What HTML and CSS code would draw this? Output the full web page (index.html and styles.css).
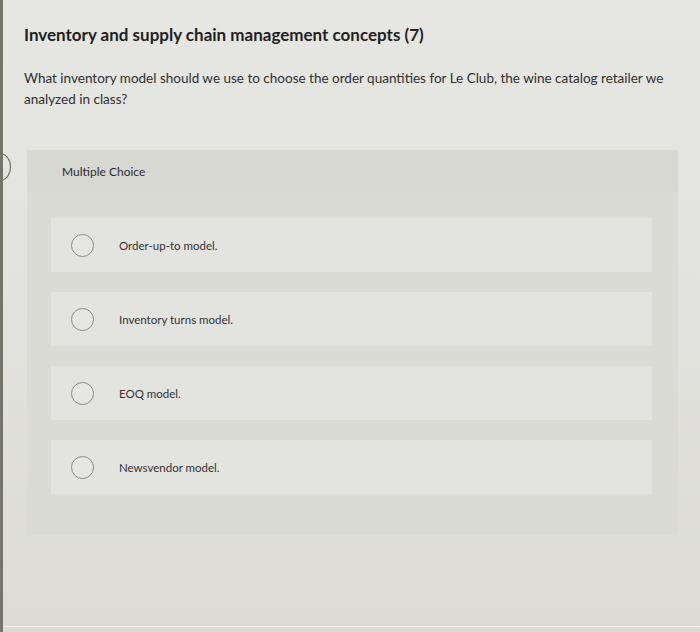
FILE: index.html
```html
<!DOCTYPE html>
<html lang="en">
<head>
<meta charset="utf-8">
<title>Inventory and supply chain management concepts (7)</title>
<link rel="stylesheet" href="styles.css">
</head>
<body>
<div class="edge-mark"></div>
<main class="page">
  <h1 class="title">Inventory and supply chain management concepts (7)</h1>
  <p class="question">What inventory model should we use to choose the order quantities for Le Club, the wine catalog retailer we analyzed in class?</p>
  <section class="panel">
    <div class="panel-head">Multiple Choice</div>
    <div class="options">
      <label class="option"><span class="radio"></span><span class="opt-text">Order-up-to model.</span></label>
      <label class="option"><span class="radio"></span><span class="opt-text">Inventory turns model.</span></label>
      <label class="option"><span class="radio"></span><span class="opt-text">EOQ model.</span></label>
      <label class="option"><span class="radio"></span><span class="opt-text">Newsvendor model.</span></label>
    </div>
  </section>
</main>
<div class="bottom-line"></div>
</body>
</html>
```

FILE: styles.css
```css
html, body {
  margin: 0;
  padding: 0;
}
body {
  position: relative;
  width: 700px;
  height: 632px;
  box-sizing: border-box;
  border-left: 3px solid #74746c;
  background: linear-gradient(180deg, #e6e6e3 0%, #e2e2de 50%, #dcdbd5 100%);
  font-family: Lato, "Open Sans", Arial, sans-serif;
  color: #333;
  overflow: hidden;
}
.edge-mark {
  position: absolute;
  left: -14px;
  top: 153px;
  width: 20px;
  height: 26px;
  border: 1.5px solid #6a6a62;
  border-radius: 50%;
}
.page {
  display: flex;
  flex-direction: column;
  padding-top: 24px;
}
.title {
  margin: 0 0 0 21px;
  font-size: 17px;
  line-height: 22px;
  font-weight: 700;
  color: #1f1f1f;
  letter-spacing: 0;
}
.question {
  margin: 22px 0 0 21px;
  width: 640px;
  font-size: 13.5px;
  line-height: 21px;
  color: #2f2f2f;
}
.panel {
  margin: 40px 0 0 24px;
  width: 651px;
  background: #dbdbd6;
  padding-bottom: 41px;
}
.panel-head {
  height: 42px;
  display: flex;
  align-items: center;
  padding-left: 35px;
  background: #d8d8d3;
  font-size: 12px;
  color: #2c2c2c;
}
.options {
  display: flex;
  flex-direction: column;
  gap: 20px;
  padding: 26px 26px 0 24px;
}
.option {
  height: 54px;
  display: flex;
  align-items: center;
  padding-left: 20px;
  background: #e3e3df;
}
.radio {
  width: 21px;
  height: 21px;
  border: 1.5px solid #8a8a86;
  border-radius: 50%;
  background: #e6e6e2;
  flex: none;
}
.opt-text {
  margin-left: 25px;
  font-size: 11.5px;
  color: #333;
}
.bottom-line {
  position: absolute;
  left: 0;
  right: 0;
  top: 626px;
  height: 1px;
  background: #eeeeea;
}
```
